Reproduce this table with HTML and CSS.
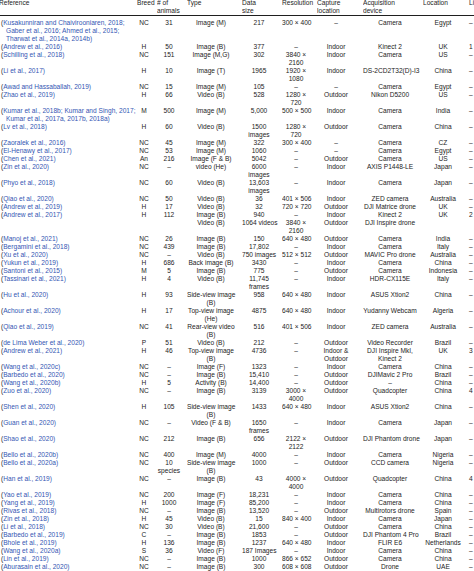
FILE: index.html
```html
<!DOCTYPE html>
<html>
<head>
<meta charset="utf-8">
<link rel="stylesheet" href="styles.css">
</head>
<body>
<div class="frame">
<table class="tbl">
<thead>
<tr>
<th class="c-ref hd-ref">Reference</th>
<th class="c-breed">Breed</th>
<th class="c-anim"># of<br>animals</th>
<th class="c-type">Type</th>
<th class="c-size">Data<br>size</th>
<th class="c-res">Resolution</th>
<th class="c-cap">Capture<br>location</th>
<th class="c-dev">Acquisition<br>device</th>
<th class="c-loc">Location</th>
<th class="c-link">Link</th>
</tr>
</thead>
<tbody>
<tr class="first"><td class="ref">(<a>Kusakunniran and Chaivirooniaren, 2018;<br>Gaber et al., 2016; Ahmed et al., 2015;<br>Tharwat et al., 2014a, 2014b)</a></td><td>NC</td><td>31</td><td>Image (M)</td><td>217</td><td>300 × 400</td><td>–</td><td>Camera</td><td>Egypt</td><td class="lk">–</td></tr>
<tr><td class="ref">(<a>Andrew et al., 2016)</a></td><td>H</td><td>50</td><td>Image (B)</td><td>377</td><td>–</td><td>Indoor</td><td>Kinect 2</td><td>UK</td><td class="lk">1</td></tr>
<tr><td class="ref">(<a>Schilling et al., 2018)</a></td><td>NC</td><td>151</td><td>Image (M,G)</td><td>302</td><td>3840 ×<br>2160</td><td>Indoor</td><td>Camera</td><td>US</td><td class="lk">–</td></tr>
<tr><td class="ref">(<a>Li et al., 2017)</a></td><td>H</td><td>10</td><td>Image (T)</td><td>1965</td><td>1920 ×<br>1080</td><td>Indoor</td><td>DS-2CD2T32(D)-I3</td><td>China</td><td class="lk">–</td></tr>
<tr><td class="ref">(<a>Awad and Hassaballah, 2019)</a></td><td>NC</td><td>15</td><td>Image (M)</td><td>105</td><td>–</td><td>–</td><td>Camera</td><td>Egypt</td><td class="lk">–</td></tr>
<tr><td class="ref">(<a>Zhao et al., 2019)</a></td><td>H</td><td>66</td><td>Video (B)</td><td>528</td><td>1280 ×<br>720</td><td>Outdoor</td><td>Nikon D5200</td><td>US</td><td class="lk">–</td></tr>
<tr><td class="ref">(<a>Kumar et al., 2018b; Kumar and Singh, 2017;<br>Kumar et al., 2017a, 2017b, 2018a)</a></td><td>M</td><td>500</td><td>Image (M)</td><td>5,000</td><td>500 × 500</td><td>Indoor</td><td>Camera</td><td>India</td><td class="lk">–</td></tr>
<tr><td class="ref">(<a>Lv et al., 2018)</a></td><td>H</td><td>60</td><td>Video (B)</td><td>1500<br>images</td><td>1280 ×<br>720</td><td>Outdoor</td><td>Camera</td><td>China</td><td class="lk">–</td></tr>
<tr><td class="ref">(<a>Zaoralek et al., 2016)</a></td><td>NC</td><td>45</td><td>Image (M)</td><td>322</td><td>300 × 400</td><td>–</td><td>Camera</td><td>CZ</td><td class="lk">–</td></tr>
<tr><td class="ref">(<a>El-Henawy et al., 2017)</a></td><td>NC</td><td>53</td><td>Image (M)</td><td>1060</td><td>–</td><td>–</td><td>Camera</td><td>Egypt</td><td class="lk">–</td></tr>
<tr><td class="ref">(<a>Chen et al., 2021)</a></td><td>An</td><td>216</td><td>Image (F &amp; B)</td><td>5042</td><td>–</td><td>Outdoor</td><td>Camera</td><td>US</td><td class="lk">–</td></tr>
<tr><td class="ref">(<a>Zin et al., 2020)</a></td><td>NC</td><td>–</td><td>video (He)</td><td>6000<br>images</td><td>–</td><td>Indoor</td><td>AXIS P1448-LE</td><td>Japan</td><td class="lk">–</td></tr>
<tr><td class="ref">(<a>Phyo et al., 2018)</a></td><td>NC</td><td>60</td><td>Video (B)</td><td>13,603<br>images</td><td>–</td><td>Indoor</td><td>Camera</td><td>Japan</td><td class="lk">–</td></tr>
<tr><td class="ref">(<a>Qiao et al., 2020)</a></td><td>NC</td><td>50</td><td>Video (B)</td><td>36</td><td>401 × 506</td><td>Indoor</td><td>ZED camera</td><td>Australia</td><td class="lk">–</td></tr>
<tr><td class="ref">(<a>Andrew et al., 2019)</a></td><td>H</td><td>17</td><td>Video (B)</td><td>32</td><td>720 × 720</td><td>Outdoor</td><td>DJI Matrice drone</td><td>UK</td><td class="lk">–</td></tr>
<tr><td class="ref">(<a>Andrew et al., 2017)</a></td><td>H</td><td>112</td><td>Image (B)</td><td>940</td><td>–</td><td>Indoor</td><td>Kinect 2</td><td>UK</td><td class="lk">2</td></tr>
<tr><td class="ref"></td><td></td><td></td><td>Video (B)</td><td>1064 videos</td><td>3840 ×<br>2160</td><td>Outdoor</td><td>DJI Inspire drone</td><td></td><td class="lk"></td></tr>
<tr><td class="ref">(<a>Manoj et al., 2021)</a></td><td>NC</td><td>26</td><td>Image (B)</td><td>150</td><td>640 × 480</td><td>Outdoor</td><td>Camera</td><td>India</td><td class="lk">–</td></tr>
<tr><td class="ref">(<a>Bergamini et al., 2018)</a></td><td>NC</td><td>439</td><td>Image (B)</td><td>17,802</td><td>–</td><td>Indoor</td><td>Camera</td><td>Italy</td><td class="lk">–</td></tr>
<tr><td class="ref">(<a>Xu et al., 2020)</a></td><td>NC</td><td>–</td><td>Video (B)</td><td>750 images</td><td>512 × 512</td><td>Outdoor</td><td>MAVIC Pro drone</td><td>Australia</td><td class="lk">–</td></tr>
<tr><td class="ref">(<a>Yukun et al., 2019)</a></td><td>H</td><td>686</td><td>Back image (B)</td><td>3430</td><td>–</td><td>Indoor</td><td>Camera</td><td>China</td><td class="lk">–</td></tr>
<tr><td class="ref">(<a>Santoni et al., 2015)</a></td><td>M</td><td>5</td><td>Image (B)</td><td>775</td><td>–</td><td>Outdoor</td><td>Camera</td><td>Indonesia</td><td class="lk">–</td></tr>
<tr><td class="ref">(<a>Tassinari et al., 2021)</a></td><td>H</td><td>4</td><td>Video (B)</td><td>11,745<br>frames</td><td>–</td><td>Indoor</td><td>HDR-CX115E</td><td>Italy</td><td class="lk">–</td></tr>
<tr><td class="ref">(<a>Hu et al., 2020)</a></td><td>H</td><td>93</td><td>Side-view image<br>(B)</td><td>958</td><td>640 × 480</td><td>Indoor</td><td>ASUS Xtion2</td><td>China</td><td class="lk">–</td></tr>
<tr><td class="ref">(<a>Achour et al., 2020)</a></td><td>H</td><td>17</td><td>Top-view image<br>(He)</td><td>4875</td><td>640 × 480</td><td>Indoor</td><td>Yudanny Webcam</td><td>Algeria</td><td class="lk">–</td></tr>
<tr><td class="ref">(<a>Qiao et al., 2019)</a></td><td>NC</td><td>41</td><td>Rear-view video<br>(B)</td><td>516</td><td>401 × 506</td><td>Indoor</td><td>ZED camera</td><td>Australia</td><td class="lk">–</td></tr>
<tr><td class="ref">(<a>de Lima Weber et al., 2020)</a></td><td>P</td><td>51</td><td>Video (B)</td><td>212</td><td>–</td><td>Outdoor</td><td>Video Recorder</td><td>Brazil</td><td class="lk">–</td></tr>
<tr><td class="ref">(<a>Andrew et al., 2021)</a></td><td>H</td><td>46</td><td>Top-view image<br>(B)</td><td>4736</td><td>–</td><td>Indoor &amp;<br>Outdoor</td><td>DJI Inspire MkI,<br>Kinect 2</td><td>UK</td><td class="lk">3</td></tr>
<tr><td class="ref">(<a>Wang et al., 2020c)</a></td><td>NC</td><td>–</td><td>Image (F)</td><td>1323</td><td>–</td><td>Indoor</td><td>Camera</td><td>China</td><td class="lk">–</td></tr>
<tr><td class="ref">(<a>Barbedo et al., 2020)</a></td><td>NC</td><td>–</td><td>Image (B)</td><td>15,410</td><td>–</td><td>Outdoor</td><td>DJIMavic 2 Pro</td><td>Brazil</td><td class="lk">–</td></tr>
<tr><td class="ref">(<a>Wang et al., 2020b)</a></td><td>H</td><td>5</td><td>Activity (B)</td><td>14,400</td><td>–</td><td>Outdoor</td><td>–</td><td>China</td><td class="lk">–</td></tr>
<tr><td class="ref">(<a>Zuo et al., 2020)</a></td><td>NC</td><td>–</td><td>Image (B)</td><td>3139</td><td>3000 ×<br>4000</td><td>Outdoor</td><td>Quadcopter</td><td>China</td><td class="lk">4</td></tr>
<tr><td class="ref">(<a>Shen et al., 2020)</a></td><td>H</td><td>105</td><td>Side-view image<br>(B)</td><td>1433</td><td>640 × 480</td><td>Indoor</td><td>ASUS Xtion2</td><td>China</td><td class="lk">–</td></tr>
<tr><td class="ref">(<a>Guan et al., 2020)</a></td><td>NC</td><td>–</td><td>Video (F &amp; B)</td><td>1650<br>frames</td><td>–</td><td>Indoor</td><td>Camera</td><td>Japan</td><td class="lk">–</td></tr>
<tr><td class="ref">(<a>Shao et al., 2020)</a></td><td>NC</td><td>212</td><td>Image (B)</td><td>656</td><td>2122 ×<br>2122</td><td>Outdoor</td><td>DJI Phantom drone</td><td>Japan</td><td class="lk">–</td></tr>
<tr><td class="ref">(<a>Bello et al., 2020b)</a></td><td>NC</td><td>400</td><td>Image (M)</td><td>4000</td><td>–</td><td>Indoor</td><td>Camera</td><td>Nigeria</td><td class="lk">–</td></tr>
<tr><td class="ref">(<a>Bello et al., 2020a)</a></td><td>NC</td><td>10<br>species</td><td>Side-view image<br>(B)</td><td>1000</td><td>–</td><td>Outdoor</td><td>CCD camera</td><td>Nigeria</td><td class="lk">–</td></tr>
<tr><td class="ref">(<a>Han et al., 2019)</a></td><td>NC</td><td>–</td><td>Image (B)</td><td>43</td><td>4000 ×<br>4000</td><td>Outdoor</td><td>Quadcopter</td><td>China</td><td class="lk">4</td></tr>
<tr><td class="ref">(<a>Yao et al., 2019)</a></td><td>NC</td><td>200</td><td>Image (F)</td><td>18,231</td><td>–</td><td>Indoor</td><td>Camera</td><td>China</td><td class="lk">–</td></tr>
<tr><td class="ref">(<a>Yang et al., 2019)</a></td><td>H</td><td>1000</td><td>Image (F)</td><td>85,200</td><td>–</td><td>Indoor</td><td>Camera</td><td>China</td><td class="lk">–</td></tr>
<tr><td class="ref">(<a>Rivas et al., 2018)</a></td><td>NC</td><td>–</td><td>Image (B)</td><td>13,520</td><td>–</td><td>Outdoor</td><td>Multirotors drone</td><td>Spain</td><td class="lk">–</td></tr>
<tr><td class="ref">(<a>Zin et al., 2018)</a></td><td>H</td><td>45</td><td>Video (B)</td><td>15</td><td>840 × 400</td><td>Indoor</td><td>Camera</td><td>Japan</td><td class="lk">–</td></tr>
<tr><td class="ref">(<a>Li et al., 2018)</a></td><td>NC</td><td>30</td><td>Video (B)</td><td>21,600</td><td>–</td><td>Outdoor</td><td>Camera</td><td>China</td><td class="lk">–</td></tr>
<tr><td class="ref">(<a>Barbedo et al., 2019)</a></td><td>C</td><td>–</td><td>Image (B)</td><td>1853</td><td>–</td><td>Outdoor</td><td>DJI Phantom 4 Pro</td><td>Brazil</td><td class="lk">–</td></tr>
<tr><td class="ref">(<a>Bhole et al., 2019)</a></td><td>H</td><td>136</td><td>Image (B)</td><td>1237</td><td>640 × 480</td><td>Indoor</td><td>FLIR E6</td><td>Netherlands</td><td class="lk">–</td></tr>
<tr><td class="ref">(<a>Wang et al., 2020a)</a></td><td>S</td><td>36</td><td>Video (F)</td><td>187 Images</td><td>–</td><td>Indoor</td><td>Camera</td><td>China</td><td class="lk">–</td></tr>
<tr><td class="ref">(<a>Lin et al., 2019)</a></td><td>NC</td><td>–</td><td>Image (B)</td><td>1000</td><td>866 × 652</td><td>Outdoor</td><td>Camera</td><td>China</td><td class="lk">–</td></tr>
<tr><td class="ref">(<a>Aburasain et al., 2020)</a></td><td>NC</td><td>–</td><td>Image (B)</td><td>300</td><td>608 × 608</td><td>Outdoor</td><td>Drone</td><td>UAE</td><td class="lk">–</td></tr>
</tbody>
</table>
</div>
</body>
</html>
```

FILE: styles.css
```css
html, body {
  margin: 0;
  padding: 0;
  background: #ffffff;
  overflow: hidden;
}

.frame {
  width: 474px;
  height: 571px;
  overflow: hidden;
}

.tbl {
  table-layout: fixed;
  width: 497px;
  border-collapse: collapse;
  border-spacing: 0;
  margin-top: -1px;
  font-family: "Liberation Sans", Arial, sans-serif;
  font-size: 6.6px;
  line-height: 8px;
  color: #232323;
}

.tbl th,
.tbl td {
  box-sizing: border-box;
  padding: 0;
  white-space: nowrap;
  vertical-align: top;
  overflow: hidden;
}

.tbl th {
  font-weight: normal;
  text-align: left;
  border-bottom: 1px solid #1f1f1f;
}

.tbl td {
  text-align: center;
}

.c-ref   { width: 137px; padding-right: 4px !important; }
.c-breed { width: 20px;  padding-right: 6px !important; }
.c-anim  { width: 30px;  padding-right: 6px !important; }
.c-type  { width: 55px;  padding-right: 7px !important; }
.c-size  { width: 40px;  padding-right: 6px !important; }
.c-res   { width: 35px;  padding-right: 7px !important; }
.c-cap   { width: 46px;  padding-right: 8px !important; }
.c-dev   { width: 60px;  padding-right: 6px !important; }
.c-loc   { width: 44px;  padding-right: 4px !important; }
.c-link  { width: 30px;  padding-left: 2px !important; }

.hd-ref { text-indent: -1px; }

.tbl td:nth-child(2)  { padding-right: 6px; }
.tbl td:nth-child(3)  { padding-right: 6px; }
.tbl td:nth-child(4)  { padding-right: 7px; }
.tbl td:nth-child(5)  { padding-right: 6px; }
.tbl td:nth-child(6)  { padding-right: 7px; }
.tbl td:nth-child(7)  { padding-right: 8px; }
.tbl td:nth-child(8)  { padding-right: 6px; }
.tbl td:nth-child(9)  { padding-right: 4px; }

.tbl td.ref {
  text-align: left;
  padding-left: 6px;
  padding-right: 4px;
  text-indent: -5px;
}

.tbl td.ref a {
  color: #3356b3;
  text-decoration: none;
}

.tbl td.lk {
  text-align: left;
  padding-left: 2px;
}

.tbl tr.first td {
  padding-top: 3px;
}
```
